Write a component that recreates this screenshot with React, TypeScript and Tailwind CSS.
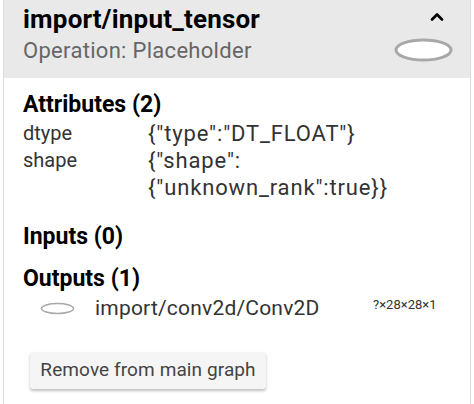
import { ChevronUp } from 'lucide-react';

function Ellipse({ w, h, stroke }: { w: number; h: number; stroke: number }) {
  return (
    <svg width={w} height={h} viewBox={`0 0 ${w} ${h}`}>
      <ellipse
        cx={w / 2}
        cy={h / 2}
        rx={w / 2 - stroke}
        ry={h / 2 - stroke}
        fill="white"
        stroke="#a8a8a8"
        strokeWidth={stroke}
      />
    </svg>
  );
}

export default function App() {
  return (
    <div className="w-[474px] h-[404px] bg-white overflow-hidden font-['Roboto',sans-serif]">
      <div className="ml-[3px] mr-[3px] h-full border-x border-[#dcdcdc] flex flex-col">
        <div className="bg-[#e9e9e9] h-[78px] pl-[19px] pr-[16px] flex justify-between">
          <div className="flex flex-col">
            <div className="text-[26px] leading-[30px] font-bold text-black mt-[4px] tracking-[0.2px]">import/input_tensor</div>
            <div className="text-[22px] leading-[26px] text-[#666] mt-[4px] tracking-[0.3px]">Operation: Placeholder</div>
          </div>
          <div className="flex flex-col items-end">
            <ChevronUp className="w-[20px] h-[20px] mt-[7px] mr-[7px] text-black" strokeWidth={3.2} />
            <div className="mt-[10px]">
              <Ellipse w={61} h={26} stroke={3} />
            </div>
          </div>
        </div>

        <div className="pl-[19px] pr-[18px] pt-[13px] text-[#333]">
          <div className="text-[23px] leading-[28px] font-bold text-black">Attributes (2)</div>
          <div className="flex text-[20px] leading-[27px] mt-[1px]">
            <div className="w-[125px] shrink-0">dtype</div>
            <div className="text-[22px] tracking-[0.85px]">{'{"type":"DT_FLOAT"}'}</div>
          </div>
          <div className="flex text-[20px] leading-[27px]">
            <div className="w-[125px] shrink-0">shape</div>
            <div className="text-[22px] tracking-[0.85px]">
              <div>{'{"shape":'}</div>
              <div>{'{"unknown_rank":true}}'}</div>
            </div>
          </div>

          <div className="text-[23px] leading-[28px] font-bold text-black mt-[22px]">Inputs (0)</div>
          <div className="text-[23px] leading-[28px] font-bold text-black mt-[14px]">Outputs (1)</div>
          <div className="flex items-center mt-[2px] h-[27px]">
            <div className="ml-[17px] w-[55px] shrink-0 flex">
              <Ellipse w={35} h={13} stroke={1.5} />
            </div>
            <div className="text-[21px] leading-[27px] text-[#333] w-[278px] tracking-[0.2px]">import/conv2d/Conv2D</div>
            <div className="text-[13px] leading-[16px] text-[#333] -mt-[8px]">?×28×28×1</div>
          </div>

          <button className="mt-[30px] ml-[7px] h-[37px] w-[236px] bg-[#f5f5f5] rounded-[3px] shadow-[0_2px_3px_rgba(0,0,0,0.25)] text-[19px] text-[#444] tracking-[0.1px]">
            Remove from main graph
          </button>
        </div>
      </div>
    </div>
  );
}
